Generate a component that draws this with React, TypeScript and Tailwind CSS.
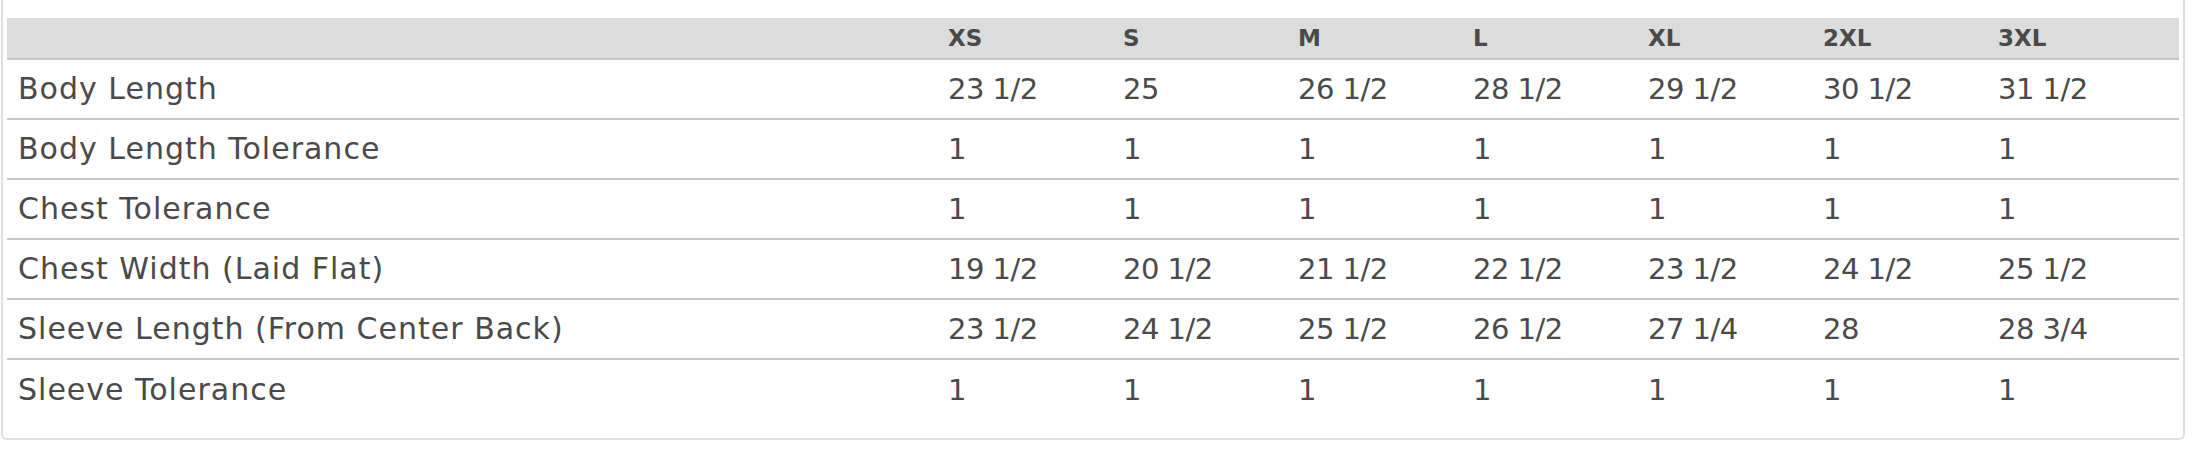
import React from "react";

type Row = {
  label: string;
  values: string[];
};

const sizes = ["XS", "S", "M", "L", "XL", "2XL", "3XL"];

const rows: Row[] = [
  { label: "Body Length", values: ["23 1/2", "25", "26 1/2", "28 1/2", "29 1/2", "30 1/2", "31 1/2"] },
  { label: "Body Length Tolerance", values: ["1", "1", "1", "1", "1", "1", "1"] },
  { label: "Chest Tolerance", values: ["1", "1", "1", "1", "1", "1", "1"] },
  { label: "Chest Width (Laid Flat)", values: ["19 1/2", "20 1/2", "21 1/2", "22 1/2", "23 1/2", "24 1/2", "25 1/2"] },
  { label: "Sleeve Length (From Center Back)", values: ["23 1/2", "24 1/2", "25 1/2", "26 1/2", "27 1/4", "28", "28 3/4"] },
  { label: "Sleeve Tolerance", values: ["1", "1", "1", "1", "1", "1", "1"] },
];

const cols = "grid grid-cols-[930px_175px_175px_175px_175px_175px_175px_1fr]";

export default function App() {
  return (
    <div
      className="w-[2200px] h-[470px] bg-white text-[#4a4a4a]"
      style={{ fontFamily: '"DejaVu Sans", "Open Sans", sans-serif' }}
    >
      <div className="ml-[1px] w-[2184px] border-2 border-t-0 border-[#dedede] rounded-b-[6px] pt-[18px] px-[4px] pb-[18px]">
        {/* header */}
        <div className={`${cols} h-[42px] bg-[#dcdcdc] border-b-2 border-[#c6c6c6] items-center`}>
          <div />
          {sizes.map((s) => (
            <div key={s} className="pl-[11px] text-[23px] font-bold leading-none">
              {s}
            </div>
          ))}
        </div>

        {rows.map((row, i) => (
          <div
            key={row.label}
            className={`${cols} h-[60px] items-center ${
              i < rows.length - 1 ? "border-b-2 border-[#c6c6c6]" : ""
            }`}
          >
            <div className="pl-[11px] text-[30px] tracking-[1px] leading-none whitespace-nowrap">
              {row.label}
            </div>
            {row.values.map((v, j) => (
              <div key={j} className="pl-[11px] text-[29px] tracking-[-0.5px] leading-none whitespace-nowrap">
                {v}
              </div>
            ))}
          </div>
        ))}
      </div>
    </div>
  );
}
